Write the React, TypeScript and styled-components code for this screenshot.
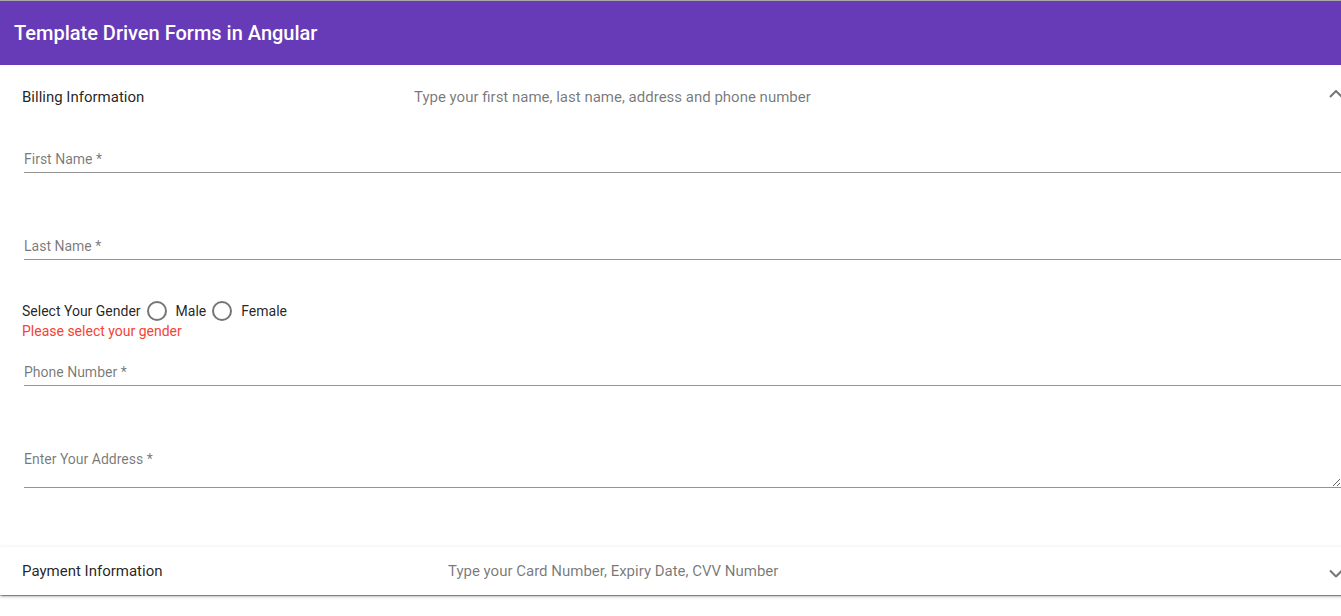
import React from "react";
import styled, { createGlobalStyle } from "styled-components";

const GlobalStyle = createGlobalStyle`
  html, body {
    margin: 0;
    padding: 0;
    background: #fff;
    overflow: hidden;
    font-family: Roboto, "Helvetica Neue", sans-serif;
  }
`;

const Page = styled.div`
  width: 1365px;
  min-height: 616px;
  border-top: 1px solid #a8a8a8;
`;

const Toolbar = styled.header`
  height: 64px;
  display: flex;
  align-items: center;
  padding: 0 14px;
  background: #673ab7;
  color: #fff;
  font-size: 20px;
  font-weight: 500;
`;

const Panel = styled.section<{ $raised?: boolean; $gap?: boolean }>`
  background: #fff;
  margin-bottom: ${(p) => (p.$gap ? "16px" : "0")};
  box-shadow: ${(p) =>
    p.$raised
      ? "0 1px 0 0 rgba(0,0,0,.22), 0 3px 1px -2px rgba(0,0,0,.2), 0 2px 2px 0 rgba(0,0,0,.14), 0 1px 5px 0 rgba(0,0,0,.12)"
      : "none"};
`;

const Header = styled.div<{ $expanded?: boolean }>`
  height: ${(p) => (p.$expanded ? "64px" : "48px")};
  display: flex;
  align-items: center;
  padding: 0 22px;
  font-size: 15px;
`;

const Title = styled.div<{ $width: number }>`
  flex: 0 0 ${(p) => p.$width}px;
  color: rgba(0, 0, 0, 0.87);
`;

const Description = styled.div`
  flex: 1;
  color: rgba(0, 0, 0, 0.54);
`;

const Indicator = styled.svg<{ $shift: number }>`
  flex: 0 0 14px;
  transform: translateY(${(p) => p.$shift}px);
`;

const Body = styled.div`
  padding: 0 24px 16px 22px;
`;

const Field = styled.div<{ $top?: number; $after?: number }>`
  margin-left: 2px;
  padding-top: ${(p) => p.$top ?? 20}px;
  margin-bottom: ${(p) => p.$after ?? 43}px;
`;

const Input = styled.input`
  display: block;
  box-sizing: border-box;
  width: 100%;
  height: 24px;
  margin: 0;
  padding: 0 0 3px;
  border: none;
  border-bottom: 1px solid rgba(0, 0, 0, 0.42);
  outline: none;
  background: transparent;
  font: 14px/20px Roboto, sans-serif;
  color: rgba(0, 0, 0, 0.87);

  &::placeholder {
    color: rgba(0, 0, 0, 0.54);
  }
`;

const TextArea = styled.textarea`
  display: block;
  box-sizing: border-box;
  width: 100%;
  height: 39px;
  margin: 0;
  padding: 0;
  border: none;
  border-bottom: 1px solid rgba(0, 0, 0, 0.42);
  outline: none;
  resize: vertical;
  background: transparent;
  font: 14px/20px Roboto, sans-serif;
  color: rgba(0, 0, 0, 0.87);

  &::placeholder {
    color: rgba(0, 0, 0, 0.54);
  }
`;

const GenderRow = styled.div`
  display: flex;
  align-items: center;
  height: 20px;
  font-size: 14px;
  color: rgba(0, 0, 0, 0.87);
`;

const RadioOption = styled.label`
  display: flex;
  align-items: center;
  margin-left: 6px;
  cursor: pointer;
`;

const RadioCircle = styled.span`
  box-sizing: border-box;
  width: 20px;
  height: 20px;
  border: 2px solid rgba(0, 0, 0, 0.54);
  border-radius: 50%;
  margin-right: 9px;
`;

const ErrorText = styled.div`
  margin-top: 2px;
  font-size: 14px;
  line-height: 16px;
  color: #f44336;
`;

const Chevron = ({ up, shift }: { up?: boolean; shift: number }) => (
  <Indicator $shift={shift} width="14" height="8" viewBox="0 0 14 8">
    <polyline
      points={up ? "1,7 7,1 13,7" : "1,1 7,7 13,1"}
      fill="none"
      stroke="rgba(0,0,0,0.54)"
      strokeWidth="2"
    />
  </Indicator>
);

export default function App() {
  return (
    <Page>
      <GlobalStyle />
      <Toolbar>Template Driven Forms in Angular</Toolbar>

      <Panel $gap>
        <Header $expanded>
          <Title $width={392}>Billing Information</Title>
          <Description>Type your first name, last name, address and phone number</Description>
          <Chevron up shift={-3} />
        </Header>
        <Body>
          <Field>
            <Input placeholder="First Name *" />
          </Field>
          <Field $after={41}>
            <Input placeholder="Last Name *" />
          </Field>
          <GenderRow>
            Select Your Gender
            <RadioOption>
              <RadioCircle />
              Male
            </RadioOption>
            <RadioOption>
              <RadioCircle />
              Female
            </RadioOption>
          </GenderRow>
          <ErrorText>Please select your gender</ErrorText>
          <Field $top={23}>
            <Input placeholder="Phone Number *" />
          </Field>
          <Field $after={27}>
            <TextArea placeholder="Enter Your Address *" />
          </Field>
        </Body>
      </Panel>

      <Panel $raised>
        <Header>
          <Title $width={426}>Payment Information</Title>
          <Description>Type your Card Number, Expiry Date, CVV Number</Description>
          <Chevron shift={2.5} />
        </Header>
      </Panel>
    </Page>
  );
}
